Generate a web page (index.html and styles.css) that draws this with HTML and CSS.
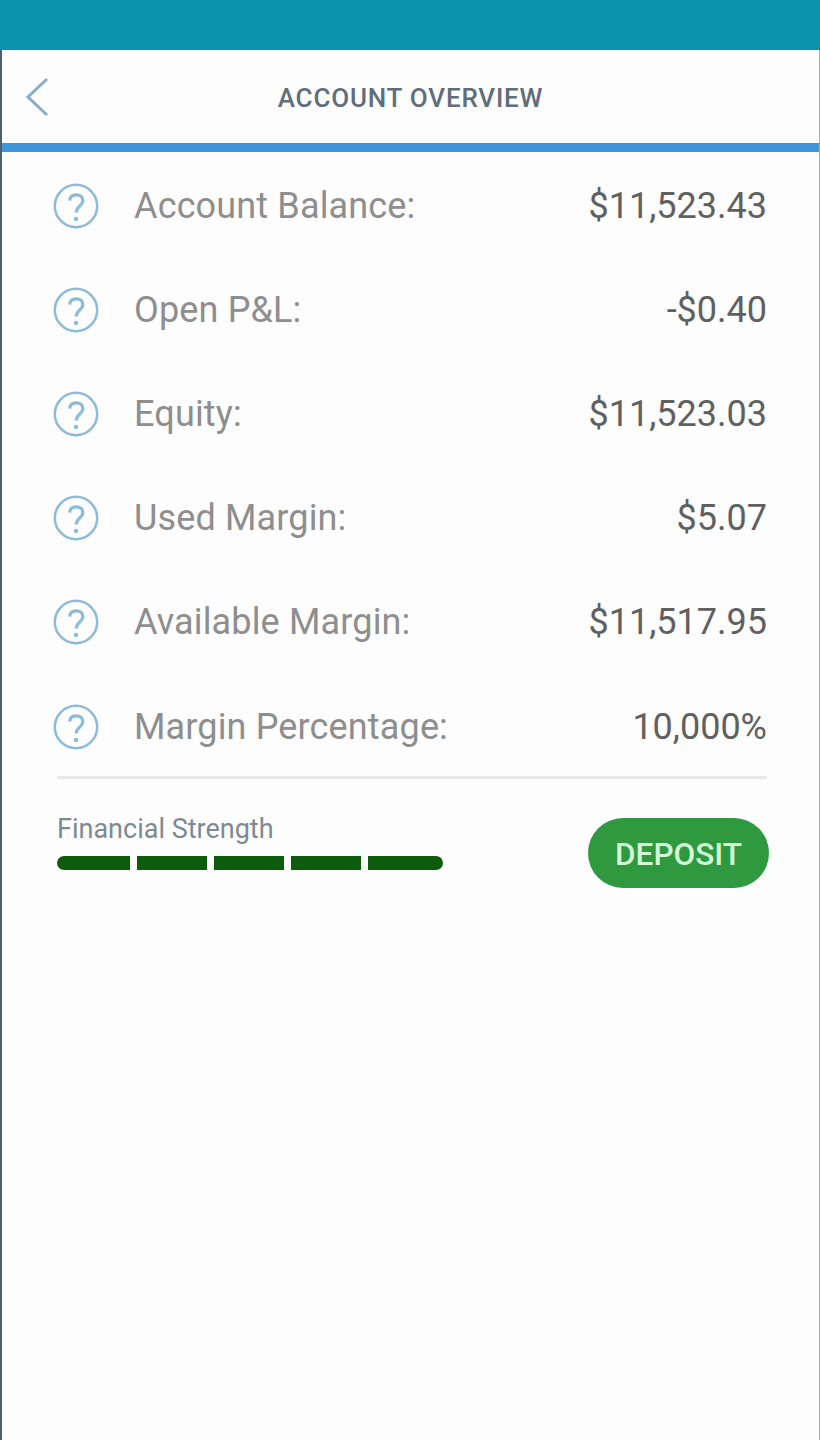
FILE: index.html
```
<!DOCTYPE html>
<html lang="en">
<head>
  <meta charset="UTF-8">
  <meta name="viewport" content="width=device-width, initial-scale=1.0">
  <title>Account Overview</title>
  <link rel="stylesheet" href="styles.css">
</head>
<body>
  <svg class="sprite" aria-hidden="true">
    <symbol id="help" viewBox="0 0 46 46">
      <circle cx="23" cy="23" r="21.2" />
      <path class="hook" d="M16.600 17.600c.3-3.700 2.900-5.800 6.600-5.800 4 0 6.600 2.200 6.600 5.700 0 5.400-6.600 6-6.600 12" />
      <circle class="dot" cx="23" cy="36" r="2.200" />
    </symbol>
  </svg>

  <div class="status-bar"></div>
  <div class="screen">
    <header class="header">
      <button class="back" aria-label="Back">
        <svg width="24" height="40" viewBox="0 0 24 40"><path d="M22 2 3 20l19 18" /></svg>
      </button>
      <h1>ACCOUNT OVERVIEW</h1>
    </header>

    <main class="content">
      <ul class="rows">
        <li><svg class="help"><use href="#help" /></svg><span class="label">Account Balance:</span><span class="value">$11,523.43</span></li>
        <li><svg class="help"><use href="#help" /></svg><span class="label">Open P&amp;L:</span><span class="value">-$0.40</span></li>
        <li><svg class="help"><use href="#help" /></svg><span class="label">Equity:</span><span class="value">$11,523.03</span></li>
        <li><svg class="help"><use href="#help" /></svg><span class="label">Used Margin:</span><span class="value">$5.07</span></li>
        <li><svg class="help"><use href="#help" /></svg><span class="label">Available Margin:</span><span class="value">$11,517.95</span></li>
        <li><svg class="help"><use href="#help" /></svg><span class="label">Margin Percentage:</span><span class="value">10,000%</span></li>
      </ul>

      <div class="footer">
        <div class="strength">
          <p>Financial Strength</p>
          <div class="meter">
            <span></span><span></span><span></span><span></span><span></span>
          </div>
        </div>
        <button class="deposit">DEPOSIT</button>
      </div>
    </main>
  </div>
</body>
</html>
```

FILE: styles.css
```
* {
  box-sizing: border-box;
}
body {
  margin: 0;
  height: 1440px;
  display: flex;
  flex-direction: column;
  font-family: Roboto, "Liberation Sans", sans-serif;
  background: #fdfdfd;
}
button {
  border: 0;
  padding: 0;
  font-family: inherit;
}
.sprite {
  display: none;
}
.status-bar {
  height: 50px;
  background: #0c93ac;
}
.screen {
  flex: 1;
  border-left: 2px solid #4c6070;
  border-right: 1px solid #8fb4c2;
}

/* Header */
.header {
  height: 102px;
  display: grid;
  grid-template-columns: 72px 1fr 72px;
  align-items: center;
  border-bottom: 9px solid #3f95da;
}
.back {
  height: 40px;
  padding-left: 23px;
  background: none;
  text-align: left;
}
.back svg {
  display: block;
  fill: none;
  stroke: #86aeca;
  stroke-width: 3;
}
h1 {
  margin: 2px 0 0;
  text-align: center;
  font-size: 26px;
  font-weight: 500;
  letter-spacing: 0.8px;
  color: #5f6e7a;
}

/* Account rows */
.content {
  padding: 2px 52px 0 51px;
}
.rows {
  list-style: none;
  margin: 0;
  padding: 0;
}
.rows li {
  height: 104.1px;
  display: flex;
  align-items: center;
  font-size: 36px;
}
.help {
  width: 46px;
  height: 46px;
  margin-right: 35px;
  fill: none;
  stroke: #8dbbda;
  stroke-width: 2.500;
}
.hook {
  stroke-width: 3.2;
}
.dot {
  fill: #8dbbda;
  stroke: none;
}
.label {
  flex: 1;
  letter-spacing: 0.15px;
  color: #8e8e8e;
}
.value {
  color: #606060;
}

/* Financial strength */
.footer {
  margin-left: 4px;
  margin-top: -3px;
  padding-top: 39px;
  border-top: 3px solid #e8e8e8;
  display: flex;
  justify-content: space-between;
}
.strength p {
  margin: -5px 0 11px;
  font-size: 27px;
  line-height: 32px;
  color: #7d8995;
}
.meter {
  display: grid;
  grid-template-columns: 73px 70px 70px 70px 75px;
  gap: 7px;
}
.meter span {
  height: 14px;
  background: #0d5c0c;
}
.meter span:first-child {
  border-radius: 7px 0 0 7px;
}
.meter span:last-child {
  border-radius: 0 7px 7px 0;
}
.deposit {
  width: 181px;
  height: 70px;
  margin-right: -2px;
  padding-top: 3px;
  border-radius: 35px;
  background: #2f9940;
  color: #d2f8d8;
  font-size: 31.5px;
  font-weight: 500;
}
```
